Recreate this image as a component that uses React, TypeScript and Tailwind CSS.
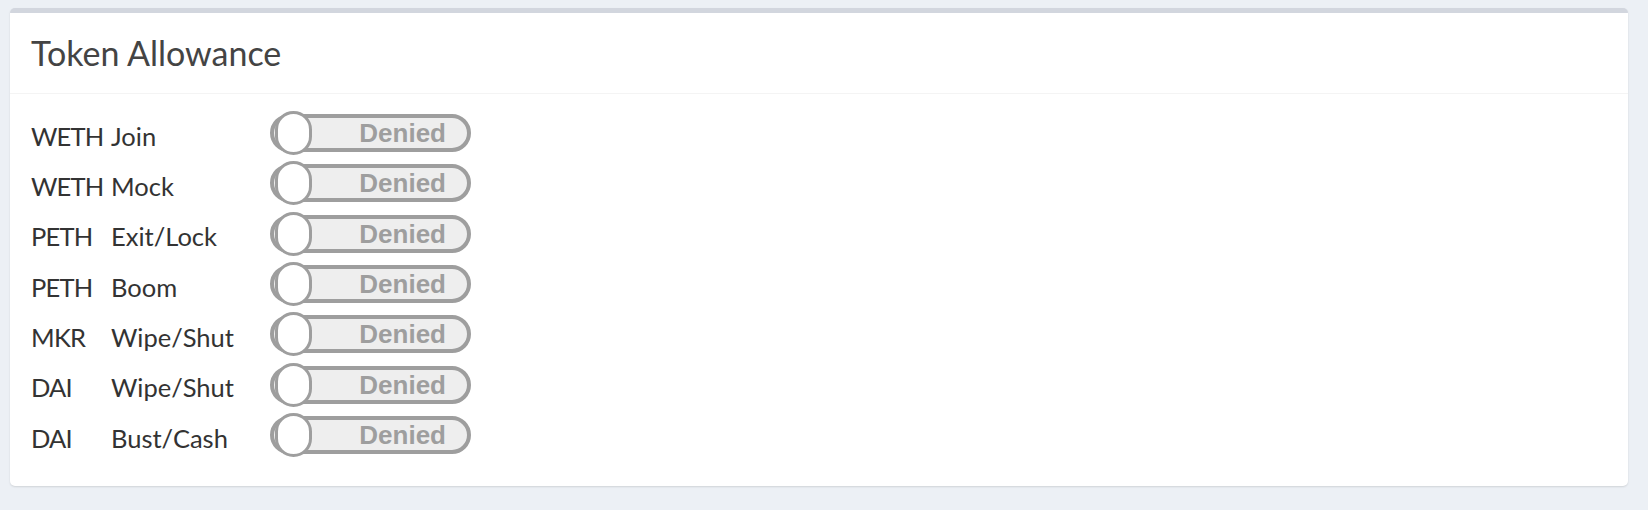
const rows: [string, string][] = [
  ["WETH", "Join"],
  ["WETH", "Mock"],
  ["PETH", "Exit/Lock"],
  ["PETH", "Boom"],
  ["MKR", "Wipe/Shut"],
  ["DAI", "Wipe/Shut"],
  ["DAI", "Bust/Cash"],
];

const Toggle = () => (
  <div className="relative flex h-[38px] w-[201px] items-center justify-end rounded-full border-4 border-[#9e9e9e] bg-[#eeeeee] pr-[21px]">
    <div className="absolute left-[1px] top-[-7px] h-[44px] w-[37px] rounded-full border-[3px] border-[#9e9e9e] bg-white" />
    <span className="font-['Liberation_Sans',Arial,sans-serif] text-[26px] font-bold leading-none text-[#9e9e9e]">
      Denied
    </span>
  </div>
);

export default function App() {
  return (
    <div className="min-h-[510px] w-full bg-[#ecf0f5] pl-[10px] pr-[20px] pt-[8px] font-['Lato',sans-serif]">
      <div className="rounded-[5px] border-t-[5px] border-[#d2d6de] bg-white shadow-[0_1px_2px_rgba(0,0,0,0.12)]">
        <div className="flex h-[81px] items-center border-b border-[#f4f4f4] px-[21px]">
          <h3 className="text-[34px] leading-none text-[#444]">Token Allowance</h3>
        </div>
        <div className="px-[21px] pb-[26px] pt-[14px]">
          {rows.map(([token, action], i) => (
            <div key={i} className="flex h-[50.33px] items-center text-[25.5px] text-[#333]">
              <span className="w-[80px] whitespace-nowrap pt-[5px] tracking-[-0.8px]">{token}</span>
              <span className="w-[159px] whitespace-nowrap pt-[5px]">{action}</span>
              <Toggle />
            </div>
          ))}
        </div>
      </div>
    </div>
  );
}
